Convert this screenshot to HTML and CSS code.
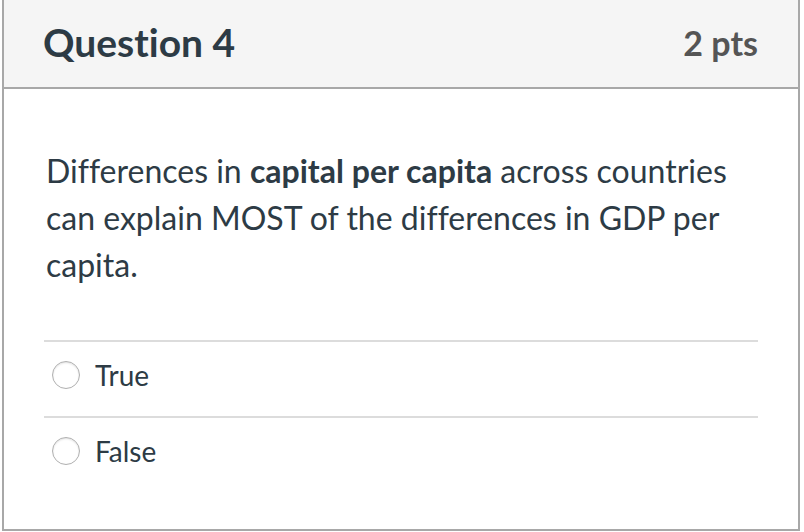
FILE: index.html
```html
<!DOCTYPE html>
<html>
<head>
<meta charset="utf-8">
<link rel="stylesheet" href="styles.css">
</head>
<body>
<div class="card">
  <div class="header">
    <h2 class="title">Question 4</h2>
    <span class="pts">2 pts</span>
  </div>
  <div class="body">
    <p class="text">Differences in <strong>capital per capita</strong> across countries can explain MOST of the differences in GDP per capita.</p>
    <div class="answers">
      <label class="answer"><span class="radio"></span><span class="label">True</span></label>
      <label class="answer"><span class="radio"></span><span class="label">False</span></label>
    </div>
  </div>
</div>
</body>
</html>
```
FILE: styles.css
```css
html, body {
  margin: 0;
  padding: 0;
  background: #fff;
}
body {
  font-family: Lato, "Liberation Sans", sans-serif;
  color: #2d3b45;
  font-variant-ligatures: none;
}
.card {
  margin: -2px 0 0 2px;
  width: 798px;
  height: 533px;
  box-sizing: border-box;
  border: 2px solid #a8a8a8;
  display: flex;
  flex-direction: column;
}
.header {
  height: 84px;
  background: #f5f5f5;
  border-bottom: 2px solid #a8a8a8;
  display: flex;
  align-items: center;
  justify-content: space-between;
  padding: 0 40px 3px 39px;
  box-sizing: content-box;
}
.title {
  margin: 0;
  font-size: 39px;
  font-weight: 700;
  color: #2d3b45;
}
.pts {
  font-size: 34px;
  font-weight: 700;
  color: #555;
}
.body {
  padding: 0 40px 0 40px;
}
.text {
  margin: 58px 0 0 2px;
  font-size: 32px;
  line-height: 47px;
}
.answers {
  margin-top: 52px;
  display: flex;
  flex-direction: column;
}
.answer {
  display: flex;
  align-items: center;
  height: 66px;
  padding: 0 0 8px 8px;
  border-top: 2px solid #dcdcdc;
}
.radio {
  width: 28px;
  height: 28px;
  border-radius: 50%;
  border: 1px solid #b0b0b0;
  box-sizing: border-box;
  background: #fff;
  box-shadow: inset 0 1px 2px rgba(0,0,0,0.12);
  margin-right: 15px;
}
.label {
  font-size: 28px;
}
```
